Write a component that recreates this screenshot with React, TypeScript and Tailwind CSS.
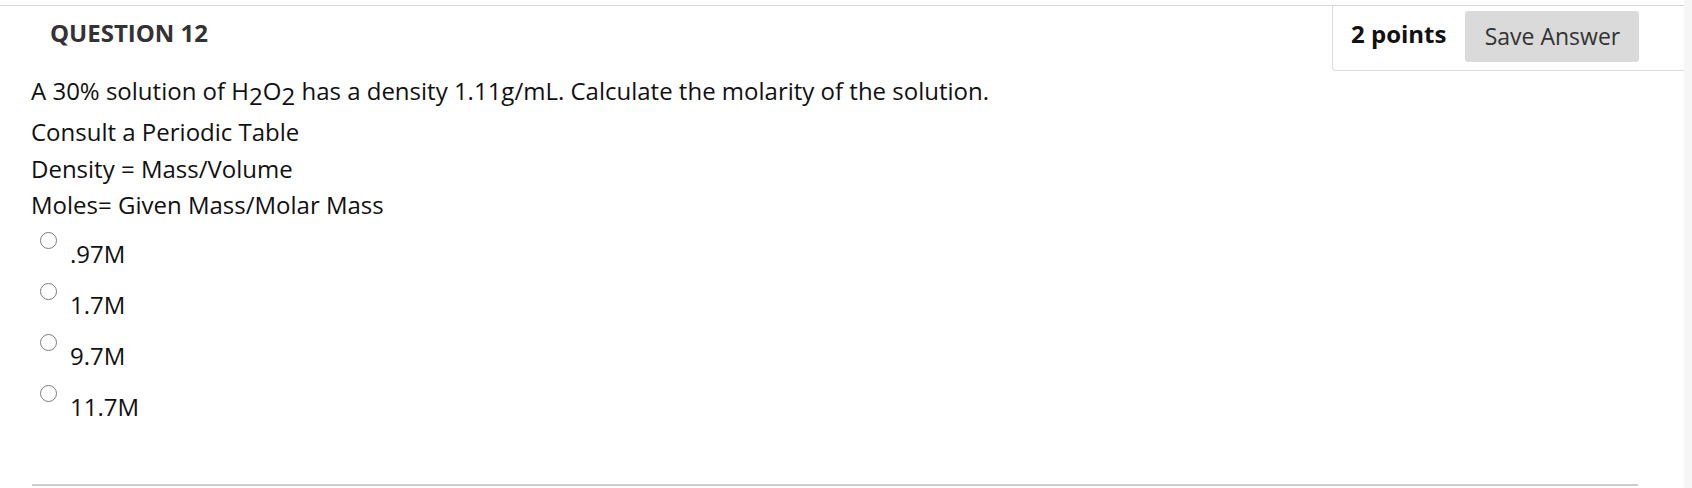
import React from 'react';

const options = ['.97M', '1.7M', '9.7M', '11.7M'];

function Radio() {
  return <div className="w-[17px] h-[17px] mt-[3px] rounded-full border border-[#7c7c7c] bg-white shrink-0" />;
}

export default function App() {
  return (
    <div className="flex w-[1692px] h-[488px] bg-white overflow-hidden" style={{ fontFamily: '"Open Sans", "Liberation Sans", sans-serif' }}>
      <div className="w-[1684px] flex flex-col">
        <div className="mt-[5px] border-t border-[#d6d6d6] flex justify-between items-start">
          <h2 className="pl-[50px] pt-[11px] text-[24px] leading-[32px] font-bold text-[#333]">QUESTION 12</h2>
          <div className="w-[352px] h-[65px] border-l border-b border-[#dcdcdc] rounded-bl-[4px] flex items-start pl-[18px]">
            <span className="mt-[12px] text-[24px] leading-[32px] font-bold text-[#111]">2 points</span>
            <button className="ml-[19px] mt-[5px] w-[174px] h-[51px] bg-[#dadada] rounded-[3px] text-[23px] leading-[51px] text-[#333]">
              Save Answer
            </button>
          </div>
        </div>

        <div className="pl-[31px] mt-[2px] text-[24px] leading-[36px] text-[#111]">
          <p className="mb-[5px]">
            A 30% solution of H<sub className="text-[24px] relative -bottom-[5px] leading-none">2</sub>O<sub className="text-[24px] relative -bottom-[5px] leading-none">2</sub> has a density 1.11g/mL. Calculate the molarity of the solution.
          </p>
          <p>Consult a Periodic Table</p>
          <p className="mt-[1px]">Density = Mass/Volume</p>
          <p>Moles= Given Mass/Molar Mass</p>
        </div>

        <div className="mt-[6px] pl-[40px] flex flex-col">
          {options.map((opt) => (
            <label key={opt} className="flex items-start h-[51px]">
              <Radio />
              <span className="ml-[13px] mt-[7px] text-[24px] leading-[36px] text-[#111]">{opt}</span>
            </label>
          ))}
        </div>

        <div className="mt-[51px] ml-[32px] w-[1606px] border-t-2 border-[#cdcdcd]" />
      </div>
      <div className="w-[8px] bg-[#f6f6f6]" />
    </div>
  );
}
